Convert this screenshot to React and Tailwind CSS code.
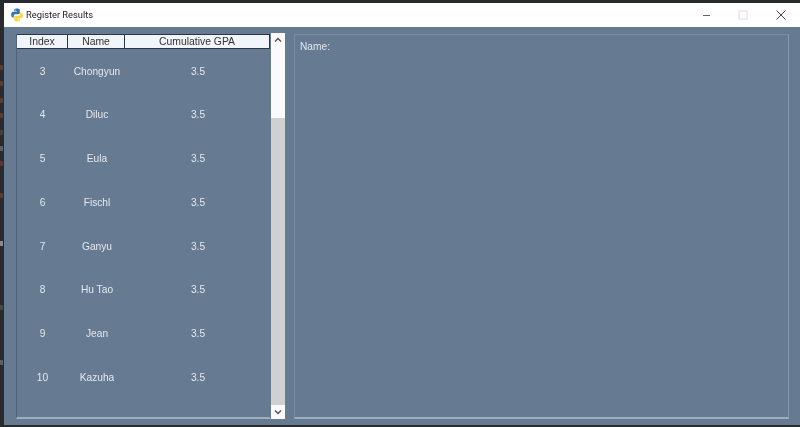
// Register Results window
const ROWS = [
  { index: 3, name: 'Chongyun' },
  { index: 4, name: 'Diluc' },
  { index: 5, name: 'Eula' },
  { index: 6, name: 'Fischl' },
  { index: 7, name: 'Ganyu' },
  { index: 8, name: 'Hu Tao' },
  { index: 9, name: 'Jean' },
  { index: 10, name: 'Kazuha' },
]

// editor text peeking out behind the window
const PEEK = [
  { c: 'bg-[#5a3d30]', mt: 'mt-[65px]' },
  { c: 'bg-[#5a3d30]', mt: 'mt-[11px]' },
  { c: 'bg-[#5a3d30]', mt: 'mt-[12px]' },
  { c: 'bg-[#5a3d30]', mt: 'mt-[10px]' },
  { c: 'bg-[#46403c]', mt: 'mt-[12px]' },
  { c: 'bg-[#5c6060]', mt: 'mt-[11px]' },
  { c: 'bg-[#5e3636]', mt: 'mt-[10px]' },
  { c: 'bg-[#5a3d30]', mt: 'mt-[27px]' },
  { c: 'bg-[#8a8c8c]', mt: 'mt-[43px]' },
  { c: 'bg-[#464a44]', mt: 'mt-[59px]' },
  { c: 'bg-[#5c6060]', mt: 'mt-[50px]' },
]

function PythonIcon() {
  return (
    <svg width="14" height="14" viewBox="0 0 24 24" className="shrink-0">
      <path fill="#3776ab" d="M11.900 1C6.800 1 7.100 3.200 7.100 3.200v2.400h4.900v.7H5.200S2 5.900 2 11.100s2.800 5 2.800 5h1.700v-2.400s-.1-2.800 2.800-2.800h4.800s2.700 0 2.700-2.600V3.700S16.900 1 11.900 1zM9.200 2.600a.9.9 0 1 1 0 1.800.9.9 0 0 1 0-1.800z" />
      <path fill="#ffd43b" d="M12.100 23c5.100 0 4.800-2.200 4.800-2.200v-2.400H12v-.7h6.800s3.200.4 3.200-4.800-2.800-5-2.800-5h-1.700v2.400s.1 2.800-2.800 2.800H9.900s-2.700 0-2.700 2.600v4.600S6.800 23 12.100 23zm2.700-1.600a.9.9 0 1 1 0-1.800.9.9 0 0 1 0 1.800z" />
    </svg>
  )
}

function HeaderCell({ className, children }) {
  return (
    <div className={`flex items-center justify-center border-y border-r border-[#2a3545] bg-[#f1f4f9] pt-[1px] text-[#333] ${className}`}>
      {children}
    </div>
  )
}

export default function App() {
  return (
    <div className="flex h-[427px] w-[800px] overflow-hidden bg-[#282a2b] font-['Liberation_Sans',Arial,sans-serif] blur-[0.3px]">
      {/* left strip */}
      <div className="flex w-[4px] shrink-0 flex-col">
        {PEEK.map((p, i) => (
          <div key={i} className={`h-[5px] w-[3px] shrink-0 ${p.c} ${p.mt}`} />
        ))}
      </div>

      <div className="mt-[3px] mb-[2px] flex min-w-0 flex-1 flex-col bg-[#667a91]">
        {/* title bar */}
        <div className="flex h-[24px] shrink-0 items-center bg-white pl-[6px]">
          <PythonIcon />
          <span className="ml-[2px] font-['Roboto',sans-serif] text-[9.300px] text-[#222]">Register Results</span>
          <div className="ml-auto flex items-center">
            <svg width="10" height="10" viewBox="0 0 10 10" className="mr-[25px]">
              <path d="M0 5.500h7" stroke="#666" strokeWidth="1" />
            </svg>
            <svg width="10" height="10" viewBox="0 0 10 10" className="mr-[28px]">
              <rect x="1" y="1" width="8" height="8" fill="none" stroke="#dcdcdc" strokeWidth="1" />
            </svg>
            <svg width="10" height="10" viewBox="0 0 10 10" className="mr-[14px]">
              <path d="M.5.500l9 9M9.500.500l-9 9" stroke="#444" strokeWidth="1" />
            </svg>
          </div>
        </div>

        {/* body */}
        <div className="flex min-h-0 flex-1 pt-[6px] pl-[12px]">
          {/* table */}
          <div className="mt-[1px] flex h-[385px] w-[254px] shrink-0 flex-col border-b-2 border-l border-b-[#9fadbf] border-l-[#51627a] text-[10.200px]">
            <div className="flex h-[15px] shrink-0 text-[10.400px] leading-none">
              <HeaderCell className="w-[51px]">Index</HeaderCell>
              <HeaderCell className="w-[57px]">Name</HeaderCell>
              <HeaderCell className="flex-1">Cumulative GPA</HeaderCell>
            </div>
            <div className="flex flex-col pt-[0.500px] text-[#e3e8ee]">
              {ROWS.map(r => (
                <div key={r.index} className="flex h-[43.750px] shrink-0 items-center">
                  <div className="w-[51px] text-center">{r.index}</div>
                  <div className="w-[58px] text-center">{r.name}</div>
                  <div className="flex-1 text-center">3.5</div>
                </div>
              ))}
            </div>
          </div>

          {/* scrollbar */}
          <div className="ml-[1px] flex h-[386px] w-[14px] shrink-0 flex-col bg-[#d0d0d0]">
            <div className="flex h-[14px] shrink-0 items-center justify-center bg-[#fafafa]">
              <svg width="8" height="6" viewBox="0 0 8 6"><path d="M1 4.500l3-3 3 3" fill="none" stroke="#555" strokeWidth="1.500" /></svg>
            </div>
            <div className="h-[71px] shrink-0 bg-[#fafafa]" />
            <div className="flex-1" />
            <div className="flex h-[14px] shrink-0 items-center justify-center bg-[#fafafa]">
              <svg width="8" height="6" viewBox="0 0 8 6"><path d="M1 1.500l3 3 3-3" fill="none" stroke="#555" strokeWidth="1.500" /></svg>
            </div>
          </div>

          {/* details */}
          <div className="mt-[1px] ml-[9px] h-[385px] w-[495px] shrink-0 border border-b-2 border-t-[#7b8ca1] border-r-[#8b9aad] border-b-[#9fadbf] border-l-[#7b8ca1] pt-[4px] pl-[5px] text-[10.200px] text-[#e3e8ee]">
            Name:
          </div>
        </div>
      </div>
    </div>
  )
}
